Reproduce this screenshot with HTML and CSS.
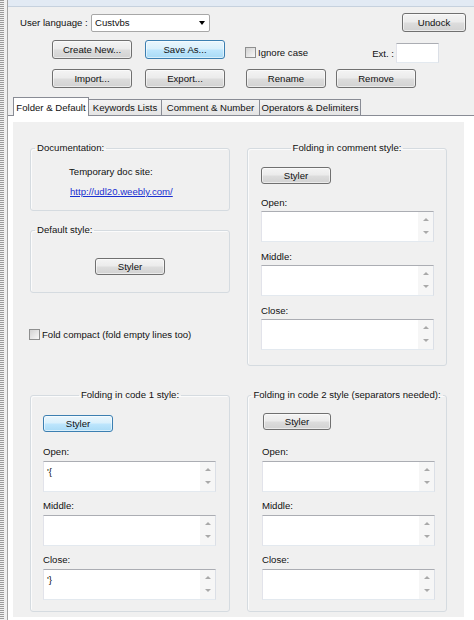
FILE: index.html
```
<!DOCTYPE html>
<html>
<head>
<meta charset="utf-8">
<title>User Defined Language</title>
<link rel="stylesheet" href="styles.css">
</head>
<body>
<div class="app">
  <div class="grip"></div>
  <div class="dlg">
    <div class="topband"></div>
    <div class="controls">
      <div class="row row1">
        <span class="lang-label">User language :</span>
        <div class="combo"><span class="combo-text">Custvbs</span><span class="combo-arrow"></span></div>
        <button class="btn undock">Undock</button>
      </div>
      <div class="row row2">
        <button class="btn">Create New...</button>
        <button class="btn btn-focus gap13">Save As...</button>
        <label class="check ignore"><span class="box"></span>Ignore case</label>
        <div class="ext"><span class="ext-label">Ext. :</span><span class="ext-input"></span></div>
      </div>
      <div class="row row3">
        <button class="btn">Import...</button>
        <button class="btn gap13">Export...</button>
        <button class="btn gap21">Rename</button>
        <button class="btn gap10">Remove</button>
      </div>
    </div>
    <div class="tabs">
      <div class="tab active t1">Folder &amp; Default</div>
      <div class="tab t2">Keywords Lists</div>
      <div class="tab t3">Comment &amp; Number</div>
      <div class="tab t4">Operators &amp; Delimiters</div>
    </div>
    <div class="panel">
      <div class="inner">
        <div class="col">
          <fieldset class="group doc">
            <legend>Documentation:</legend>
            <div class="gbody">
              <div class="doc-line">Temporary doc site:</div>
              <a class="doc-link" href="#">http://udl20.weebly.com/</a>
            </div>
          </fieldset>
          <fieldset class="group def">
            <legend>Default style:</legend>
            <div class="gbody">
              <button class="btn styler styler-center">Styler</button>
            </div>
          </fieldset>
          <label class="check fold"><span class="box"></span>Fold compact (fold empty lines too)</label>
        </div>
        <div class="col">
          <fieldset class="group center comment">
            <legend>Folding in comment style:</legend>
            <div class="gbody">
              <button class="btn styler">Styler</button>
              <div class="field"><div class="lbl">Open:</div><div class="edit"><span class="edit-text"></span><span class="sb"></span></div></div>
              <div class="field"><div class="lbl">Middle:</div><div class="edit"><span class="edit-text"></span><span class="sb"></span></div></div>
              <div class="field"><div class="lbl">Close:</div><div class="edit"><span class="edit-text"></span><span class="sb"></span></div></div>
            </div>
          </fieldset>
        </div>
        <fieldset class="group center code code1">
          <legend>Folding in code 1 style:</legend>
          <div class="gbody">
            <button class="btn btn-focus styler">Styler</button>
            <div class="field"><div class="lbl">Open:</div><div class="edit"><span class="edit-text">'{</span><span class="sb"></span></div></div>
            <div class="field"><div class="lbl">Middle:</div><div class="edit"><span class="edit-text"></span><span class="sb"></span></div></div>
            <div class="field"><div class="lbl">Close:</div><div class="edit"><span class="edit-text">'}</span><span class="sb"></span></div></div>
          </div>
        </fieldset>
        <fieldset class="group center code code2">
          <legend>Folding in code 2 style (separators needed):</legend>
          <div class="gbody">
            <button class="btn styler">Styler</button>
            <div class="field"><div class="lbl">Open:</div><div class="edit"><span class="edit-text"></span><span class="sb"></span></div></div>
            <div class="field"><div class="lbl">Middle:</div><div class="edit"><span class="edit-text"></span><span class="sb"></span></div></div>
            <div class="field"><div class="lbl">Close:</div><div class="edit"><span class="edit-text"></span><span class="sb"></span></div></div>
          </div>
        </fieldset>
      </div>
    </div>
  </div>
</div>
</body>
</html>
```
FILE: styles.css
```
html, body {
  margin: 0;
  padding: 0;
}
body {
  width: 474px;
  height: 620px;
  overflow: hidden;
  background: #f0f0f0;
  font-family: "Liberation Sans", Arial, sans-serif;
  font-size: 9.6px;
  color: #111;
}
.app {
  display: flex;
  height: 620px;
}
.grip {
  width: 7px;
  flex: none;
  border-right: 1px solid #a3a3a3;
  background: repeating-linear-gradient(to bottom, #9a9a9a 0 1px, transparent 1px 2px) no-repeat 0 0 / 4px 100%;
}
.dlg {
  flex: 1;
  min-width: 0;
  display: flex;
  flex-direction: column;
}
.topband {
  flex: none;
  height: 6px;
  background: #e2eaf4;
  border-bottom: 1px solid #c6d1de;
}
.controls {
  padding: 6px 8px 0 12px;
}
.row {
  display: flex;
}
.row1 {
  align-items: center;
  height: 19px;
}
.lang-label {
  width: 71px;
  flex: none;
}
.combo {
  width: 119px;
  height: 18px;
  box-sizing: border-box;
  border: 1px solid #a7a7a7;
  border-radius: 2px;
  background: #fff;
  display: flex;
  align-items: center;
  padding: 0 4px 0 3px;
  flex: none;
}
.combo-text {
  flex: 1;
}
.combo-arrow {
  width: 0;
  height: 0;
  border-left: 3.5px solid transparent;
  border-right: 3.5px solid transparent;
  border-top: 4px solid #000;
}
.btn {
  font: inherit;
  color: #111;
  width: 80px;
  height: 19px;
  box-sizing: border-box;
  padding: 0;
  flex: none;
  border: 1px solid #707070;
  border-radius: 3px;
  background: linear-gradient(#f4f4f4 0%, #ebebeb 48%, #dddddd 52%, #d2d2d2 100%);
  box-shadow: inset 0 0 0 1px rgba(255, 255, 255, 0.55);
}
.btn-focus {
  border-color: #3c7fb1;
  background: linear-gradient(#eaf6fd 0%, #d9f0fc 48%, #bee6fd 52%, #a9dbf6 100%);
}
.undock {
  width: 64px;
  margin-left: auto;
}
.row2 {
  margin-top: 8px;
  padding-left: 32px;
  align-items: flex-start;
  height: 19px;
}
.row3 {
  margin-top: 10px;
  padding-left: 32px;
  height: 19px;
}
.gap13 { margin-left: 13px; }
.gap21 { margin-left: 21px; }
.gap10 { margin-left: 10px; }
.check {
  display: flex;
  align-items: center;
  height: 14px;
}
.box {
  width: 11px;
  height: 11px;
  box-sizing: border-box;
  border: 1px solid #8e8f8f;
  background: linear-gradient(135deg, #d2d2d2, #f8f8f8);
  margin-right: 2px;
  flex: none;
}
.ignore {
  margin-left: 20px;
  margin-top: 5px;
}
.ext {
  margin-left: auto;
  margin-right: 27px;
  margin-top: 3px;
  display: flex;
  align-items: center;
}
.ext-label {
  margin-right: 2px;
}
.ext-input {
  width: 43px;
  height: 20px;
  box-sizing: border-box;
  background: #fff;
  border: 1px solid;
  border-color: #abadb3 #dbdfe6 #e3e9ef #e2e3ea;
}
.tabs {
  display: flex;
  align-items: flex-end;
  height: 18px;
  margin-top: 9px;
  padding-left: 5px;
  position: relative;
  z-index: 1;
  flex: none;
}
.tab {
  height: 16px;
  box-sizing: border-box;
  border: 1px solid #898c95;
  border-bottom: none;
  background: linear-gradient(#f3f3f3, #e4e4e4);
  display: flex;
  align-items: center;
  justify-content: center;
  margin-left: -1px;
  flex: none;
  white-space: nowrap;
}
.tab.active {
  height: 19px;
  margin-bottom: -1px;
  margin-left: 0;
  background: #fff;
  position: relative;
  z-index: 2;
}
.t1 { width: 76px; }
.t2 { width: 74px; }
.t3 { width: 99px; }
.t4 { width: 102px; }
.panel {
  flex: 1;
  background: #fff;
  border-top: 1px solid #898c95;
  padding: 6px 10px 0 5px;
}
.inner {
  background: #f0f0f0;
  height: 495px;
  box-sizing: border-box;
  padding: 20px 0 0 17px;
  display: grid;
  grid-template-columns: 200px 200px;
  column-gap: 17px;
  row-gap: 23px;
  align-items: start;
  align-content: start;
}
.col {
  display: flex;
  flex-direction: column;
}
.group {
  margin: 0;
  padding: 0;
  width: 200px;
  min-width: 0;
  box-sizing: border-box;
  border: 1px solid #d5dbe0;
  border-radius: 3px;
  box-shadow: inset 1px 1px 0 #fbfbfb;
}
.group legend {
  padding: 0 2px;
  margin-left: 4px;
  line-height: 12px;
  white-space: nowrap;
}
.group.center legend {
  margin-left: auto;
  margin-right: auto;
}
.doc .gbody {
  padding: 0 0 11px 38px;
}
.doc-line {
  margin-top: 11px;
  line-height: 14px;
}
.doc-link {
  display: block;
  margin-top: 6px;
  line-height: 14px;
  color: #1a2fd0;
  text-decoration: underline;
  padding-left: 1px;
  width: fit-content;
}
.def {
  margin-top: 13px;
}
.def .gbody {
  padding-bottom: 17px;
}
.styler {
  display: block;
  width: 70px;
  height: 17px;
}
.styler-center {
  margin: 22px auto 0;
}
.fold {
  margin-top: 34px;
  margin-left: -1px;
}
.lbl {
  line-height: 14px;
}
.edit {
  width: 173px;
  height: 31px;
  box-sizing: border-box;
  background: #fff;
  border: 1px solid;
  border-color: #abadb3 #dbdfe6 #e3e9ef #e2e3ea;
  display: flex;
}
.edit-text {
  flex: 1;
  padding: 4px 0 0 3px;
  line-height: 12px;
}
.sb {
  width: 15px;
  flex: none;
  background: #f6f6f6;
  display: flex;
  flex-direction: column;
  justify-content: space-between;
  align-items: center;
  padding: 6px 0 7px;
  box-sizing: border-box;
}
.sb::before {
  content: "";
  border-left: 3px solid transparent;
  border-right: 3px solid transparent;
  border-bottom: 3px solid #a9a9a9;
}
.sb::after {
  content: "";
  border-left: 3px solid transparent;
  border-right: 3px solid transparent;
  border-top: 3px solid #a9a9a9;
}
.comment .gbody {
  padding: 0 0 15px 13px;
}
.comment .styler {
  margin-top: 13px;
}
.comment .field {
  margin-top: 8px;
}
.comment .styler + .field {
  margin-top: 12px;
}
.comment .edit {
  margin-top: 1px;
}
.code1 .gbody {
  padding: 0 0 11px 12px;
}
.code2 .gbody {
  padding: 0 0 11px 14px;
}
.code .field {
  margin-top: 7px;
}
.code .edit {
  margin-top: 2px;
}
.code1 .styler {
  margin-top: 14px;
}
.code1 .styler + .field {
  margin-top: 13px;
}
.code2 .styler {
  margin-top: 12px;
  margin-left: 1px;
  width: 68px;
}
.code2 .styler + .field {
  margin-top: 15px;
}
```
